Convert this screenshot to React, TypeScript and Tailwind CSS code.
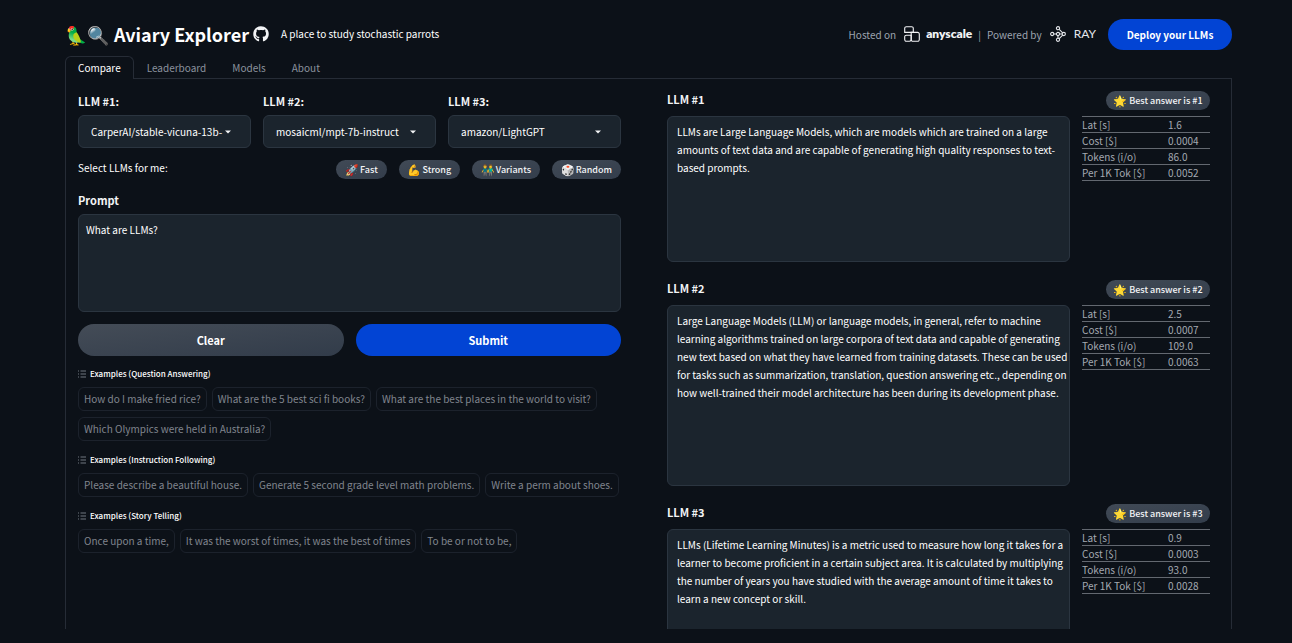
import { useState } from "react";
import { FaGithub } from "react-icons/fa";

type Result = {
  id: number;
  text: string;
  height: string;
  stats: [string, string][];
};

const TABS = ["Compare", "Leaderboard", "Models", "About"];

const MODELS = [
  "CarperAI/stable-vicuna-13b-",
  "mosaicml/mpt-7b-instruct",
  "amazon/LightGPT",
];

const PRESETS = [
  { icon: "🚀", label: "Fast" },
  { icon: "💪", label: "Strong" },
  { icon: "👬", label: "Variants" },
  { icon: "🎲", label: "Random" },
];

const EXAMPLES = [
  {
    title: "Examples (Question Answering)",
    items: [
      "How do I make fried rice?",
      "What are the 5 best sci fi books?",
      "What are the best places in the world to visit?",
      "Which Olympics were held in Australia?",
    ],
  },
  {
    title: "Examples (Instruction Following)",
    items: [
      "Please describe a beautiful house.",
      "Generate 5 second grade level math problems.",
      "Write a perm about shoes.",
    ],
  },
  {
    title: "Examples (Story Telling)",
    items: [
      "Once upon a time,",
      "It was the worst of times, it was the best of times",
      "To be or not to be,",
    ],
  },
];

const RESULTS: Result[] = [
  {
    id: 1,
    text: "LLMs are Large Language Models, which are models which are trained on a large amounts of text data and are capable of generating high quality responses to text-based prompts.",
    height: "h-[146px]",
    stats: [
      ["Lat [s]", "1.6"],
      ["Cost [$]", "0.0004"],
      ["Tokens (i/o)", "86.0"],
      ["Per 1K Tok [$]", "0.0052"],
    ],
  },
  {
    id: 2,
    text: "Large Language Models (LLM) or language models, in general, refer to machine learning algorithms trained on large corpora of text data and capable of generating new text based on what they have learned from training datasets. These can be used for tasks such as summarization, translation, question answering etc., depending on how well-trained their model architecture has been during its development phase.",
    height: "h-[181px]",
    stats: [
      ["Lat [s]", "2.5"],
      ["Cost [$]", "0.0007"],
      ["Tokens (i/o)", "109.0"],
      ["Per 1K Tok [$]", "0.0063"],
    ],
  },
  {
    id: 3,
    text: "LLMs (Lifetime Learning Minutes) is a metric used to measure how long it takes for a learner to become proficient in a certain subject area. It is calculated by multiplying the number of years you have studied with the average amount of time it takes to learn a new concept or skill.",
    height: "h-[146px]",
    stats: [
      ["Lat [s]", "0.9"],
      ["Cost [$]", "0.0003"],
      ["Tokens (i/o)", "93.0"],
      ["Per 1K Tok [$]", "0.0028"],
    ],
  },
];

function AnyscaleLogo() {
  return (
    <svg className="size-4" viewBox="0 0 16 16" fill="none" stroke="currentColor" strokeWidth="1.1">
      <path d="M.7 6.4V2.4A1.7 1.7 0 0 1 2.400.7h5.200a1.700 1.700 0 0 1 1.700 1.700v4z" />
      <path d="M7.200 9.200H2.400A1.700 1.700 0 0 0 .7 10.900v2.700a1.700 1.700 0 0 0 1.700 1.700h3.100a1.700 1.700 0 0 0 1.700-1.700z" />
      <path d="M7.200 6.400h6.400a1.700 1.700 0 0 1 1.700 1.700v5.500a1.700 1.700 0 0 1-1.700 1.700H8.900a1.700 1.700 0 0 1-1.700-1.700z" />
    </svg>
  );
}

function RayLogo() {
  return (
    <svg className="size-4" viewBox="0 0 16 16" fill="none" stroke="currentColor" strokeWidth="1.1">
      <circle cx="2.2" cy="8" r="1.6" />
      <circle cx="8" cy="8" r="1.6" />
      <circle cx="13.8" cy="8" r="1.6" />
      <circle cx="8" cy="2.2" r="1.6" />
      <circle cx="8" cy="13.8" r="1.6" />
      <path d="M3.8 8h2.600M9.600 8h2.600M8 9.600v2.600M9.200 3.300l3.500 3.500M12.700 9.200l-3.500 3.500" />
    </svg>
  );
}

function ListIcon() {
  return (
    <svg className="size-2 text-[#8b929d]" viewBox="0 0 8 8" stroke="currentColor" strokeWidth="0.8">
      <path d="M0 1h1M2.5 1H8M0 4h1M2.5 4H8M0 7h1M2.5 7H8" />
    </svg>
  );
}

function Header() {
  return (
    <header className="flex h-14 shrink-0 items-center justify-between pb-1 pt-4">
      <div className="flex items-center">
        <h1 className="text-lg font-bold leading-8 text-white">🦜🔍 Aviary Explorer</h1>
        <a href="#github" aria-label="GitHub" className="ml-1">
          <FaGithub className="size-4" />
        </a>
        <p className="ml-3 text-[10px] leading-4 text-white">
          A place to study stochastic parrots
        </p>
      </div>
      <div className="flex items-center text-[10px] text-[#9ca3af]">
        <span>Hosted on</span>
        <a href="#anyscale" className="ml-2 flex items-center gap-[6px] text-gray-100">
          <AnyscaleLogo />
          <span className="font-[Lato] text-xs font-extrabold leading-4">anyscale</span>
        </a>
        <span className="mx-[6px]">|</span>
        <span>Powered by</span>
        <a href="#ray" className="ml-2 flex items-center gap-2 text-gray-200">
          <RayLogo />
          <span className="font-[Lato] text-xs leading-4">RAY</span>
        </a>
        <button className="ml-3 h-[31px] w-[124px] rounded-full bg-[#0244d4] text-[10px] font-bold text-white">
          Deploy your LLMs
        </button>
      </div>
    </header>
  );
}

function ModelSelect({ index }: { index: number }) {
  return (
    <div className="min-w-0 flex-1">
      <label htmlFor={`model-${index}`} className="block text-[11px] font-bold leading-4">
        LLM #{index + 1}:
      </label>
      <div className="relative mt-[6px]">
        <select
          id={`model-${index}`}
          defaultValue={MODELS[index]}
          className="h-[33px] w-full appearance-none rounded-md border border-[#2b3540] bg-[#1b242d] pl-3 pr-[26px] text-[10px] text-white">
          {MODELS.map((model) => (
            <option key={model}>{model}</option>
          ))}
        </select>
        <svg className="pointer-events-none absolute right-5 top-[15px] h-1 w-[6px]" viewBox="0 0 6 4" fill="currentColor">
          <path d="M0 .5h6L3 3.5z" />
        </svg>
      </div>
    </div>
  );
}

function ExampleGroup({ title, items, onPick }: { title: string; items: string[]; onPick: (text: string) => void }) {
  return (
    <section>
      <h2 className="flex items-center gap-1 text-[8px] font-medium leading-[14px] text-white">
        <ListIcon />
        {title}
      </h2>
      <div className="mt-[6px] flex flex-wrap gap-x-[5px] gap-y-[6px]">
        {items.map((item) => (
          <button
            key={item}
            onClick={() => onPick(item)}
            className="h-6 rounded-md border border-[#1c222c] px-[5px] pb-px text-[10px] text-[#80858e]">
            {item}
          </button>
        ))}
      </div>
    </section>
  );
}

function ResultCard({ id, text, height, stats }: Result) {
  return (
    <section className="flex gap-3">
      <div className="min-w-0 flex-1">
        <label htmlFor={`answer-${id}`} className="block text-[11px] font-bold leading-4">
          LLM #{id}
        </label>
        <textarea
          id={`answer-${id}`}
          readOnly
          value={text}
          className={`mt-[9px] block w-full resize-none overflow-hidden rounded-md border border-[#2b3540] bg-[#1b242d] py-[6px] pl-[9px] pr-0 text-[10px] leading-[18px] text-white ${height}`}
        />
      </div>
      <div className="flex w-32 flex-col items-end">
        <button className="flex h-[19px] w-[104px] items-center justify-center gap-[2px] rounded-full bg-linear-to-br from-[#414a56] to-[#333d4b] text-[9px] font-medium">
          <span className="text-[11px]">🌟</span>
          Best answer is #{id}
        </button>
        <table className="mt-[6px] w-full border-collapse text-[10px] leading-[15px] text-[#a4a9b1]">
          <tbody>
            {stats.map(([name, value]) => (
              <tr key={name} className="border-y border-[#636870]">
                <th scope="row" className="p-0 text-left font-normal">{name}</th>
                <td className="w-[42px] p-0">{value}</td>
              </tr>
            ))}
          </tbody>
        </table>
      </div>
    </section>
  );
}

export default function App() {
  const [tab, setTab] = useState("Compare");
  const [prompt, setPrompt] = useState("What are LLMs?");

  return (
    <div className="h-screen bg-[#0c1118] pb-[14px] pl-[65px] pr-[60px] font-['Noto_Sans_CJK_SC','Noto_Color_Emoji',sans-serif] text-gray-100">
      <div className="flex h-full flex-col overflow-hidden">
        <Header />
        <nav className="flex h-[23px] shrink-0 text-[10px]">
          {TABS.map((name) => (
            <button
              key={name}
              onClick={() => setTab(name)}
              className={
                tab === name
                  ? "rounded-t-md border border-b-0 border-[#262c36] px-3 pb-px text-white"
                  : "border-b border-[#262c36] px-[13px] text-[#8b929d]"
              }>
              {name}
            </button>
          ))}
          <div className="flex-1 border-b border-[#262c36]" />
        </nav>
        <main className="grid min-h-0 flex-1 grid-cols-2 gap-[46px] border-x border-[#262c36] pl-3 pr-[21px] pt-3">
          <div>
            <div className="flex gap-3 pt-[2px]">
              {MODELS.map((model, index) => (
                <ModelSelect key={model} index={index} />
              ))}
            </div>
            <div className="mt-3 flex items-start justify-between">
              <p className="text-[10px] leading-4 text-white">Select LLMs for me:</p>
              <div className="flex gap-3">
                {PRESETS.map(({ icon, label }) => (
                  <button
                    key={label}
                    className="flex h-[19px] items-center gap-px rounded-full bg-linear-to-br from-[#414a56] to-[#333d4b] px-[9px] text-[9px] font-medium">
                    <span className="text-[11px]">{icon}</span>
                    {label}
                  </button>
                ))}
              </div>
            </div>
            <label htmlFor="prompt" className="mt-[13px] block text-[11px] font-bold leading-4">
              Prompt
            </label>
            <textarea
              id="prompt"
              value={prompt}
              onChange={(e) => setPrompt(e.target.value)}
              className="mt-[6px] block h-[98px] w-full resize-none rounded-md border border-[#2b3540] bg-[#1b242d] px-[7px] py-[6px] text-[10px] leading-[18px] text-white"
            />
            <div className="mt-3 grid grid-cols-2 gap-3 text-[11px] font-bold text-white">
              <button
                onClick={() => setPrompt("")}
                className="h-8 rounded-full bg-linear-to-br from-[#444c57] to-[#323c4a]">
                Clear
              </button>
              <button className="h-8 rounded-full bg-[#0244d4]">Submit</button>
            </div>
            <div className="mt-[11px] flex flex-col gap-3">
              {EXAMPLES.map((group) => (
                <ExampleGroup key={group.title} {...group} onPick={setPrompt} />
              ))}
            </div>
          </div>
          <div className="flex flex-col gap-[18px]">
            {RESULTS.map((result) => (
              <ResultCard key={result.id} {...result} />
            ))}
          </div>
        </main>
      </div>
    </div>
  );
}
